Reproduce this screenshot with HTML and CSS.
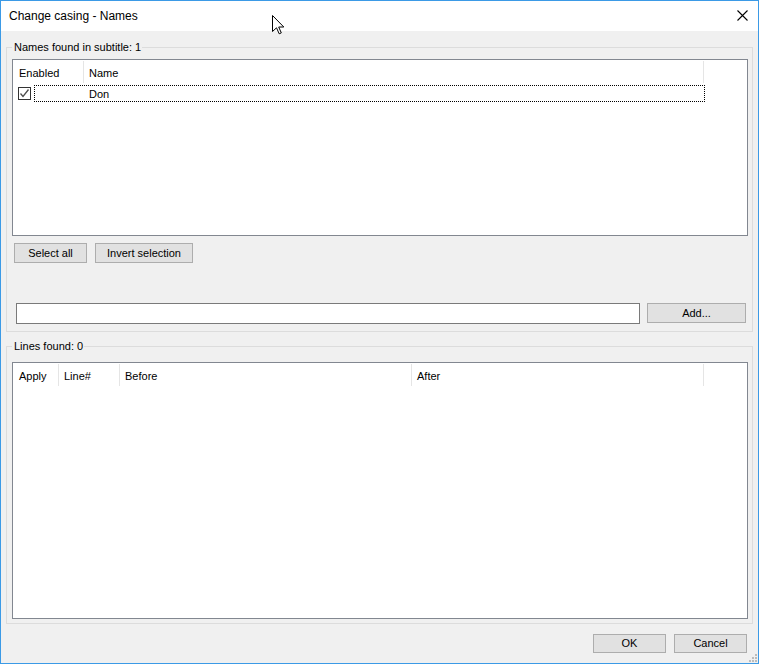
FILE: index.html
```html
<!DOCTYPE html>
<html>
<head>
<meta charset="utf-8">
<link rel="stylesheet" href="styles.css">
</head>
<body>
<div class="window">
  <div class="titlebar">
    <span class="title">Change casing - Names</span>
    <svg class="close" width="11" height="11" viewBox="0 0 11 11"><path d="M0.5 0.5 L10.5 10.5 M10.5 0.5 L0.5 10.5" stroke="#000" stroke-width="1.1" fill="none"/></svg>
  </div>
  <div class="client">
    <fieldset class="group group-names">
      <legend>Names found in subtitle: 1</legend>
      <div class="listview lv-names">
        <div class="lv-header">
          <div class="hcol c-enabled">Enabled</div>
          <div class="hcol c-name">Name</div>
        </div>
        <div class="lv-row">
          <div class="cell c-enabled-cell">
            <span class="checkbox"><svg width="11" height="11" viewBox="0 0 11 11"><path d="M1.5 5.5 L4 8.5 L9.5 1.5" stroke="#4d4d4d" stroke-width="1.3" fill="none"/></svg></span>
          </div>
          <div class="focus-rect"><span class="don">Don</span></div>
        </div>
      </div>
      <div class="btn-row">
        <button class="btn btn-select">Select all</button>
        <button class="btn btn-invert">Invert selection</button>
      </div>
      <div class="add-row">
        <div class="textbox"></div>
        <button class="btn btn-add">Add...</button>
      </div>
    </fieldset>
    <fieldset class="group group-lines">
      <legend>Lines found: 0</legend>
      <div class="listview lv-lines">
        <div class="lv-header">
          <div class="hcol c-apply">Apply</div>
          <div class="hcol c-line">Line#</div>
          <div class="hcol c-before">Before</div>
          <div class="hcol c-after">After</div>
        </div>
      </div>
    </fieldset>
    <div class="footer">
      <button class="btn btn-ok">OK</button>
      <button class="btn btn-cancel">Cancel</button>
    </div>
    <svg class="grip" width="10" height="10" viewBox="0 0 10 10">
      <rect x="8" y="2" width="2" height="2" fill="#bcbcbc"/>
      <rect x="8" y="5" width="2" height="2" fill="#bcbcbc"/>
      <rect x="5" y="5" width="2" height="2" fill="#bcbcbc"/>
      <rect x="8" y="8" width="2" height="2" fill="#bcbcbc"/>
      <rect x="5" y="8" width="2" height="2" fill="#bcbcbc"/>
      <rect x="2" y="8" width="2" height="2" fill="#bcbcbc"/>
    </svg>
  </div>
  <svg class="cursor" width="13" height="20" viewBox="0 0 13 20"><polygon points="0.5,0.5 0.5,16.5 4.5,12.8 7.2,18.8 9.3,17.9 6.7,12 11.8,12" fill="#fff" stroke="#000" stroke-width="1" stroke-linejoin="miter"/></svg>
</div>
</body>
</html>
```
FILE: styles.css
```css
* { box-sizing: border-box; }
html, body { margin: 0; padding: 0; background: #fff; }
body { font-family: "Liberation Sans", Arial, sans-serif; font-size: 11px; color: #000; }

.window {
  position: relative;
  width: 759px;
  height: 664px;
  border: 1px solid #3b9ae6;
  display: flex;
  flex-direction: column;
  overflow: hidden;
}

.titlebar {
  height: 30px;
  background: #fff;
  display: flex;
  align-items: center;
  padding-left: 8px;
  padding-right: 10px;
  flex: none;
}
.title { flex: 1; font-size: 12px; line-height: 16px; }
.close { width: 11px; height: 11px; margin-top: -1px; }

.client {
  position: relative;
  flex: 1;
  background: #f0f0f0;
  padding: 8px 5px 0 5px;
  display: flex;
  flex-direction: column;
}

.group {
  margin: 0;
  border: 1px solid #dcdcdc;
  padding: 0 4px 0 5px;
  min-width: 0;
}
.group legend {
  padding: 0 1px 0 2px;
  margin-left: 0;
  font-size: 11px;
  line-height: 17px;
  height: 16px;
}
.group-names { padding-top: 4px; padding-bottom: 7px; }
.group-lines { margin-top: 6px; padding-top: 8px; padding-bottom: 4px; }

.listview {
  background: #fff;
  border: 1px solid #828790;
}
.lv-names { height: 177px; }
.lv-lines { height: 257px; }

.lv-header {
  display: flex;
  height: 24px;
}
.hcol {
  padding-left: 6px;
  border-right: 1px solid #e5e5e5;
  margin-top: 1px;
  height: 22px;
  line-height: 24px;
  white-space: nowrap;
}
.c-enabled { width: 71px; }
.c-name { width: 620px; padding-left: 5px; }
.c-apply { width: 46px; }
.c-line { width: 61px; padding-left: 5px; }
.c-before { width: 292px; padding-left: 5px; }
.c-after { width: 292px; padding-left: 5px; }

.lv-row {
  display: flex;
  height: 17px;
  margin-top: 1px;
}
.c-enabled-cell {
  width: 21px;
  padding-left: 5px;
  padding-top: 2px;
}
.checkbox {
  display: block;
  width: 13px;
  height: 13px;
  border: 1px solid #333;
  background: #fff;
}
.checkbox svg { display: block; }
.focus-rect {
  width: 671px;
  height: 17px;
  border: 1px dotted #000;
  line-height: 17px;
  padding-left: 54px;
}

.btn {
  font-family: inherit;
  font-size: 11px;
  color: #000;
  background: #e1e1e1;
  border: 1px solid #adadad;
  padding: 0;
  margin: 0;
  height: 20px;
  line-height: 18px;
}
.btn-row {
  display: flex;
  gap: 8px;
  margin-top: 7px;
  padding-left: 2px;
}
.btn-select { width: 73px; }
.btn-invert { width: 98px; }

.add-row {
  display: flex;
  align-items: flex-start;
  margin-top: 40px;
  padding-left: 4px;
  gap: 7px;
}
.textbox {
  width: 624px;
  height: 21px;
  background: #fff;
  border: 1px solid #7a7a7a;
}
.btn-add { width: 99px; }

.footer {
  display: flex;
  justify-content: flex-end;
  gap: 8px;
  margin-top: 10px;
  padding-right: 6px;
}
.btn-ok, .btn-cancel { width: 73px; height: 19px; line-height: 17px; }

.grip {
  position: absolute;
  right: 1px;
  bottom: 1px;
}

.cursor {
  position: absolute;
  left: 271px;
  top: 14px;
}
```
